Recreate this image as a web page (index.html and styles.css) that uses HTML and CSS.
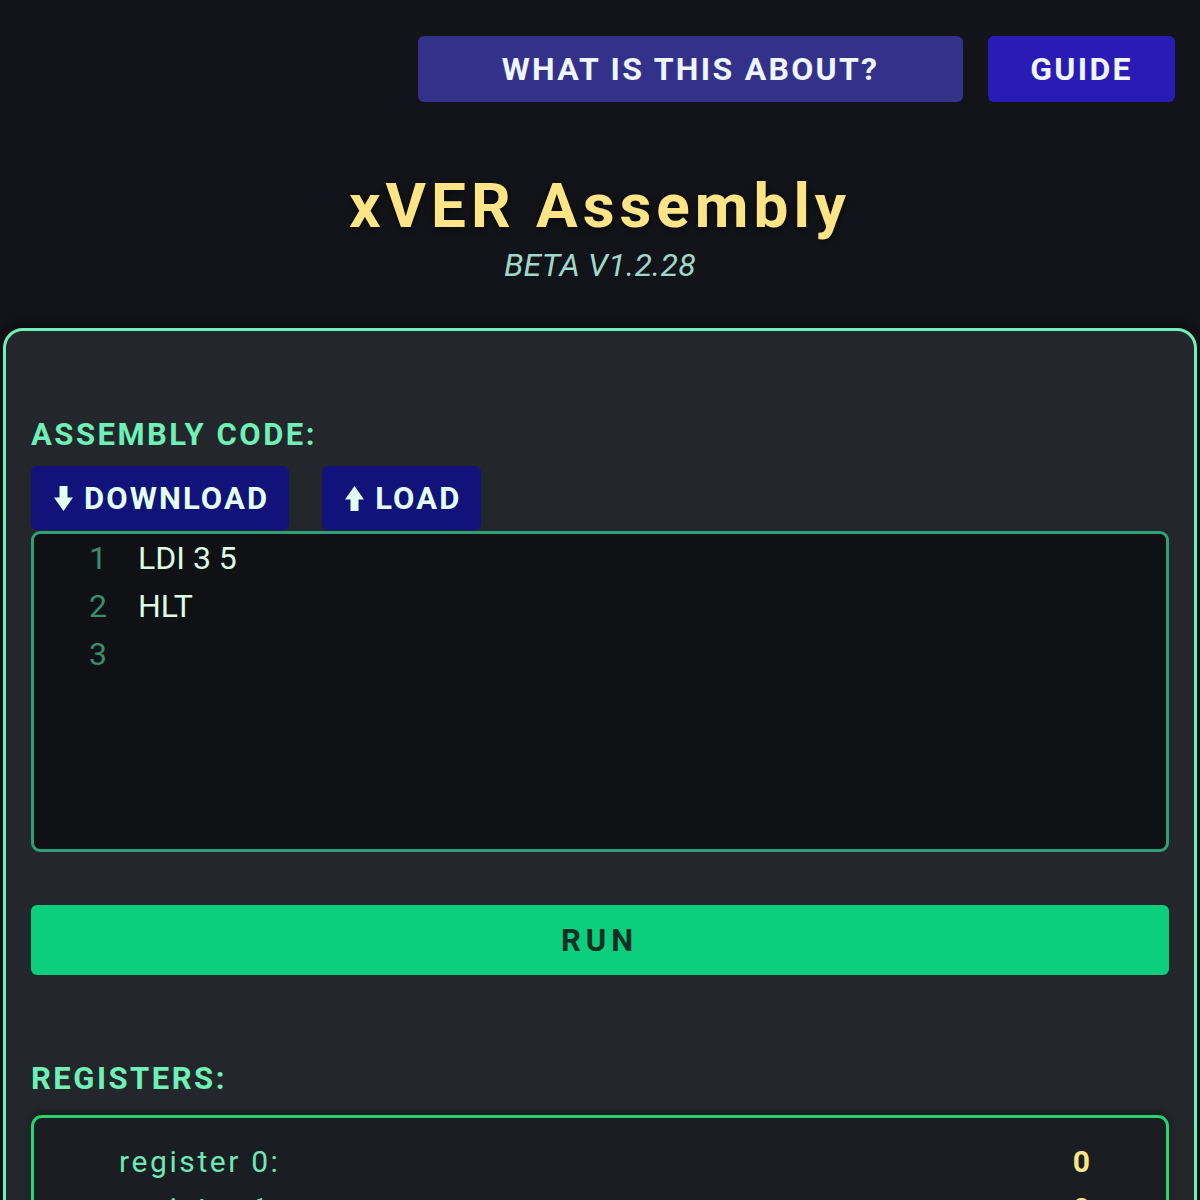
FILE: index.html
```html
<!DOCTYPE html>
<html lang="en">
<head>
<meta charset="utf-8">
<title>xVER Assembly</title>
<link rel="stylesheet" href="styles.css">
</head>
<body>
<header class="topbar">
  <button class="top-btn about">WHAT IS THIS ABOUT?</button>
  <button class="top-btn guide">GUIDE</button>
</header>
<div class="titles">
  <h1 class="title">xVER Assembly</h1>
  <div class="subtitle">BETA V1.2.28</div>
</div>
<main class="panel">
  <div class="label">ASSEMBLY CODE:</div>
  <div class="file-actions">
    <button class="file-btn"><svg class="arrow" viewBox="0 0 19 25" width="19" height="25"><rect x="5.5" y="0" width="8" height="13" fill="#e4fff2"/><polygon points="0,11.5 19,11.5 9.5,25" fill="#e4fff2"/></svg><span>DOWNLOAD</span></button>
    <button class="file-btn"><svg class="arrow" viewBox="0 0 19 25" width="19" height="25"><polygon points="0,13.5 19,13.5 9.5,0" fill="#e4fff2"/><rect x="5.5" y="12" width="8" height="13" fill="#e4fff2"/></svg><span>LOAD</span></button>
  </div>
  <div class="editor">
    <div class="line"><span class="ln">1</span><span class="code">LDI 3 5</span></div>
    <div class="line"><span class="ln">2</span><span class="code">HLT</span></div>
    <div class="line"><span class="ln">3</span><span class="code"></span></div>
  </div>
  <button class="run-btn">RUN</button>
  <div class="label registers-label">REGISTERS:</div>
  <div class="registers">
    <div class="reg"><span class="reg-name">register 0:</span><span class="reg-val">0</span></div>
    <div class="reg"><span class="reg-name">register 1:</span><span class="reg-val">0</span></div>
    <div class="reg"><span class="reg-name">register 2:</span><span class="reg-val">0</span></div>
    <div class="reg"><span class="reg-name">register 3:</span><span class="reg-val">0</span></div>
  </div>
</main>
</body>
</html>
```
FILE: styles.css
```css
html, body {
  margin: 0;
  padding: 0;
  background: #121419;
  font-family: Roboto, "Liberation Sans", sans-serif;
}
body {
  padding: 0 3px;
}
button {
  font-family: inherit;
  border: none;
  cursor: pointer;
}
.topbar {
  display: flex;
  justify-content: flex-end;
  gap: 25px;
  padding: 36px 22px 0 0;
}
.top-btn {
  height: 66px;
  border-radius: 6px;
  color: #eef6ff;
  font-size: 32px;
  font-weight: 700;
  letter-spacing: 2.3px;
  padding: 0 30px;
}
.about {
  width: 545px;
  background: #34318b;
}
.guide {
  width: 187px;
  background: #2a1bb7;
}
.titles {
  text-align: center;
  padding-top: 68px;
  height: 226px;
  box-sizing: border-box;
}
.title {
  margin: 0;
  font-size: 62px;
  line-height: 72px;
  font-weight: 700;
  letter-spacing: 5px;
  color: #fde587;
  text-shadow: 0 2px 8px rgba(0,0,0,0.6);
}
.subtitle {
  font-size: 32px;
  line-height: 40px;
  font-style: italic;
  color: #9fd8c8;
  letter-spacing: 0.3px;
  margin-top: 3px;
}
.panel {
  border: 3px solid #6ef0b6;
  border-radius: 20px;
  background: #23262b;
  padding: 86px 25px 40px;
  box-shadow: 0 -6px 14px rgba(0,0,0,0.35);
}
.label {
  font-size: 31px;
  line-height: 36px;
  font-weight: 700;
  letter-spacing: 2.5px;
  color: #6ef0b6;
}
.file-actions {
  display: flex;
  gap: 33px;
  margin-top: 13px;
}
.file-btn {
  display: flex;
  align-items: center;
  gap: 11px;
  height: 64px;
  padding: 0 20px 0 23px;
  background: #11127a;
  border-radius: 6px;
  color: #e4fff2;
  font-size: 31px;
  font-weight: 700;
  letter-spacing: 2.1px;
}
.arrow {
  display: block;
  flex: none;
}
.editor {
  margin-top: 1px;
  height: 321px;
  box-sizing: border-box;
  border: 3px solid #2f9f78;
  border-radius: 9px;
  background: #0f1114;
  padding-top: 0;
}
.line {
  display: flex;
  height: 48px;
  line-height: 48px;
  font-size: 32px;
}
.ln {
  width: 73px;
  text-align: right;
  color: #3a8d6c;
  flex: none;
}
.code {
  margin-left: 31px;
  color: #dcfbe2;
}
.run-btn {
  display: block;
  width: 100%;
  height: 70px;
  margin-top: 53px;
  border-radius: 6px;
  background: #0bcf7c;
  color: #0f2f25;
  font-size: 31px;
  font-weight: 700;
  letter-spacing: 5px;
  padding-left: 5px;
}
.registers-label {
  margin-top: 86px;
}
.registers {
  margin-top: 18px;
  border: 3px solid #25d56e;
  border-radius: 11px;
  background: #1a1d21;
  padding: 20px 76px 20px 85px;
  box-shadow: 0 -4px 6px rgba(0,0,0,0.25);
}
.reg {
  display: flex;
  justify-content: space-between;
  height: 47px;
  line-height: 47px;
  font-size: 30px;
}
.reg-name {
  color: #6ee7b7;
  letter-spacing: 2.6px;
}
.reg-val {
  color: #fde587;
  font-weight: 700;
}
```
